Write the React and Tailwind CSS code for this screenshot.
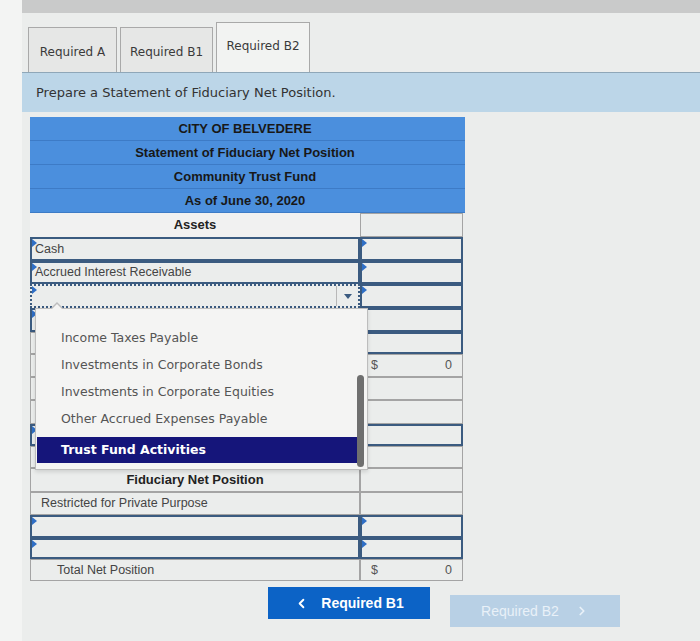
import { ChevronLeft, ChevronRight } from 'lucide-react'

const verdana = { fontFamily: '"DejaVu Sans", Verdana, sans-serif' }
const arial = { fontFamily: '"Liberation Sans", Arial, sans-serif' }

// little blue flag in the corner of an editable cell
function Flag() {
  return (
    <span className="absolute left-0 top-0 h-0 w-0 border-y-[4px] border-l-[5px] border-y-transparent border-l-[#2f6fc6]" />
  )
}

function Cell({ kind, children, className = '' }) {
  if (kind === 'input') {
    return (
      <div className={`relative h-full border-2 border-[#3b5b80] ${className}`}>
        <Flag />
        {children}
      </div>
    )
  }
  if (kind === 'select') {
    return (
      <div className={`relative flex h-full border-2 border-dotted border-[#3b5b80] ${className}`}>
        <Flag />
        <div className="flex-1" />
        <div className="flex w-[22px] items-center justify-center border-l border-[#b8b8b8]">
          <span className="h-0 w-0 border-x-[4px] border-t-[5px] border-x-transparent border-t-[#3b5b80]" />
        </div>
      </div>
    )
  }
  return <div className={`h-full border border-[#a4a4a4] ${className}`}>{children}</div>
}

function Row({ h, left, right }) {
  return (
    <div className="grid grid-cols-[330px_103px]" style={{ height: h }}>
      {left}
      {right}
    </div>
  )
}

const header = [
  'CITY OF BELVEDERE',
  'Statement of Fiduciary Net Position',
  'Community Trust Fund',
  'As of June 30, 2020',
]

const options = [
  'Income Taxes Payable',
  'Investments in Corporate Bonds',
  'Investments in Corporate Equities',
  'Other Accrued Expenses Payable',
]

function Amount() {
  return (
    <Cell className="flex items-center justify-between px-[10px] text-[12.5px] text-[#555]">
      <span>$</span>
      <span>0</span>
    </Cell>
  )
}

function Statement() {
  return (
    <div className="relative ml-[8px] mt-[5px] w-[435px] text-[#333]" style={arial}>
      {header.map((t) => (
        <div
          key={t}
          className="flex h-[24px] items-center border-b border-[#3d7bc6] bg-[#4b8fdd] pl-[100px] text-[13px] font-bold text-[#181818]"
        >
          <span className="w-[230px] text-center">{t}</span>
        </div>
      ))}

      <Row
        h={24}
        left={<div className="flex items-center justify-center bg-[#f1f1f1] text-[13px] font-bold text-[#222]">Assets</div>}
        right={<Cell />}
      />
      <Row
        h={24}
        left={
          <Cell kind="input" className="flex items-center pl-[3px] text-[12.5px] text-[#444]">
            Cash
          </Cell>
        }
        right={<Cell kind="input" />}
      />
      <Row
        h={23}
        left={
          <Cell kind="input" className="flex items-center pl-[3px] text-[12.5px] text-[#444]">
            Accrued Interest Receivable
          </Cell>
        }
        right={<Cell kind="input" />}
      />
      <Row h={24} left={<Cell kind="select" />} right={<Cell kind="input" />} />
      <Row h={24} left={<Cell kind="input" />} right={<Cell kind="input" />} />
      <Row h={22} left={<Cell />} right={<Cell kind="input" />} />
      <Row h={23} left={<Cell />} right={<Amount />} />
      <Row h={23} left={<Cell />} right={<Cell />} />
      <Row h={24} left={<Cell />} right={<Cell />} />
      <Row h={22} left={<Cell kind="input" />} right={<Cell kind="input" />} />
      <Row h={22} left={<Cell />} right={<Cell />} />
      <Row
        h={24}
        left={
          <Cell className="flex items-center justify-center text-[13px] font-bold text-[#222]">
            Fiduciary Net Position
          </Cell>
        }
        right={<Cell />}
      />
      <Row
        h={23}
        left={
          <Cell className="flex items-center pl-[10px] text-[12.5px] text-[#444]">
            Restricted for Private Purpose
          </Cell>
        }
        right={<Cell />}
      />
      <Row h={23} left={<Cell kind="input" />} right={<Cell kind="input" />} />
      <Row h={21} left={<Cell kind="input" />} right={<Cell kind="input" />} />
      <Row
        h={22}
        left={
          <Cell className="flex items-center pl-[26px] text-[12.5px] text-[#444]">
            Total Net Position
          </Cell>
        }
        right={<Amount />}
      />

      {/* open dropdown list */}
      <div
        className="absolute left-[5px] top-[191px] h-[162px] w-[333px] border border-[#bdbdbd] bg-[#f4f4f3] shadow-[0_2px_4px_rgba(0,0,0,0.12)]"
        style={verdana}
      >
        <span className="absolute -top-[7px] left-[14px] h-0 w-0 border-x-[7px] border-b-[7px] border-x-transparent border-b-[#bdbdbd]" />
        <span className="absolute -top-[5px] left-[15px] h-0 w-0 border-x-[6px] border-b-[6px] border-x-transparent border-b-[#f4f4f3]" />
        <div className="flex h-full">
          <div className="flex-1 pl-[1px] pt-[16px]">
            {options.map((o) => (
              <div key={o} className="flex h-[27px] items-center pl-[24px] text-[12.5px] text-[#555]">
                {o}
              </div>
            ))}
            <div className="mt-[4px] flex h-[26px] items-center bg-[#15157a] pl-[24px] text-[12.5px] font-bold text-white">
              Trust Fund Activities
            </div>
          </div>
          <div className="flex w-[10px] flex-col justify-end pb-[2px]">
            <div className="h-[92px] w-[7px] rounded-full bg-[#6f6f6f]" />
          </div>
        </div>
      </div>
    </div>
  )
}

export default function App() {
  return (
    <div className="flex h-[641px] w-[700px] overflow-hidden bg-[#ebedec]">
      <div className="w-[22px] bg-[#f3f4f3]" />
      <div className="flex flex-1 flex-col">
        <div className="h-[13px] bg-[#c9caca]" />
        <div className="h-[9px]" />

        {/* tabs */}
        <div className="flex h-[50px] items-end gap-[3px] pl-[6px] text-[12px] text-[#3a3a3a]" style={verdana}>
          <div className="flex h-[45px] w-[89px] items-center justify-center border border-b-0 border-[#a9a9a9] bg-[#e6e7e6] pt-[4px]">
            Required A
          </div>
          <div className="flex h-[45px] w-[93px] items-center justify-center border border-b-0 border-[#a9a9a9] bg-[#e6e7e6] pt-[4px]">
            Required B1
          </div>
          <div className="flex h-[50px] w-[94px] items-center justify-center border border-b-0 border-[#a9a9a9] bg-[#f2f3f2] pb-[4px]">
            Required B2
          </div>
        </div>

        <div className="flex h-[40px] items-center border-t border-[#8fa7b8] bg-[#bcd6e8] pl-[14px] text-[13px] text-[#333]" style={verdana}>
          Prepare a Statement of Fiduciary Net Position.
        </div>

        <Statement />

        {/* navigation */}
        <div className="ml-[246px] mt-[6px] flex items-start gap-[20px]" style={arial}>
          <button className="flex h-[32px] w-[162px] items-center justify-center gap-[12px] bg-[#0c63c6] text-[14px] font-bold text-white">
            <ChevronLeft size={15} strokeWidth={3} />
            Required B1
          </button>
          <button className="mt-[8px] flex h-[32px] w-[170px] items-center justify-center gap-[16px] bg-[#b8d0e5] text-[14px] text-[#e9f1f8]">
            Required B2
            <ChevronRight size={14} strokeWidth={3} />
          </button>
        </div>
      </div>
    </div>
  )
}
